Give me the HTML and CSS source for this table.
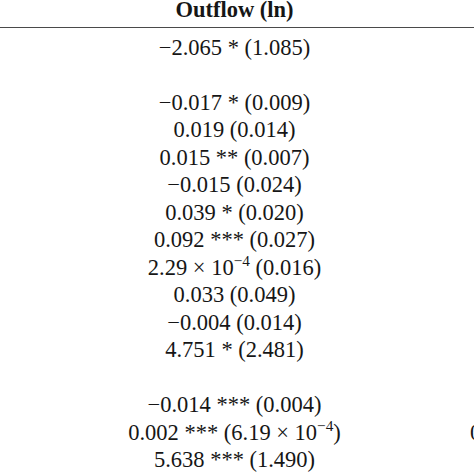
FILE: index.html
```html
<!DOCTYPE html>
<html lang="en">
<head>
<meta charset="utf-8">
<title>Outflow (ln)</title>
<link rel="stylesheet" href="styles.css">
</head>
<body>
<div class="table">
  <div class="row head"><div class="cell">Outflow (ln)</div><div class="cell side"></div></div>
  <div class="tbody">
    <div class="row"><div class="cell">−2.065 * (1.085)</div><div class="cell side"></div></div>
    <div class="row"><div class="cell"></div><div class="cell side"></div></div>
    <div class="row"><div class="cell">−0.017 * (0.009)</div><div class="cell side"></div></div>
    <div class="row"><div class="cell">0.019 (0.014)</div><div class="cell side"></div></div>
    <div class="row"><div class="cell">0.015 ** (0.007)</div><div class="cell side"></div></div>
    <div class="row"><div class="cell">−0.015 (0.024)</div><div class="cell side"></div></div>
    <div class="row"><div class="cell">0.039 * (0.020)</div><div class="cell side"></div></div>
    <div class="row"><div class="cell">0.092 *** (0.027)</div><div class="cell side"></div></div>
    <div class="row"><div class="cell">2.29 × 10<sup>−4</sup> (0.016)</div><div class="cell side"></div></div>
    <div class="row"><div class="cell">0.033 (0.049)</div><div class="cell side"></div></div>
    <div class="row"><div class="cell">−0.004 (0.014)</div><div class="cell side"></div></div>
    <div class="row"><div class="cell">4.751 * (2.481)</div><div class="cell side"></div></div>
    <div class="row"><div class="cell"></div><div class="cell side"></div></div>
    <div class="row"><div class="cell">−0.014 *** (0.004)</div><div class="cell side"></div></div>
    <div class="row"><div class="cell">0.002 *** (6.19 × 10<sup>−4</sup>)</div><div class="cell side">0</div></div>
    <div class="row"><div class="cell">5.638 *** (1.490)</div><div class="cell side"></div></div>
  </div>
</div>
</body>
</html>
```
FILE: styles.css
```css
html, body {
  margin: 0;
  padding: 0;
  background: #ffffff;
}
body {
  width: 474px;
  height: 474px;
  overflow: hidden;
}
.table {
  font-family: "Liberation Serif", "Times New Roman", serif;
  font-size: 22.5px;
  color: #161616;
  width: 560px;
}
.row {
  display: grid;
  grid-template-columns: 469px 91px;
  height: 27.5px;
  line-height: 27.5px;
}
.cell {
  text-align: center;
  white-space: nowrap;
}
.cell.side {
  text-align: left;
  padding-left: 1px;
}
.head {
  margin-top: -4.5px;
  padding-bottom: 4px;
  border-bottom: 1.5px solid #4a4a4a;
  font-weight: bold;
}
.tbody {
  padding-top: 5.7px;
}
sup {
  font-size: 0.68em;
  line-height: 0;
  vertical-align: 0.62em;
}
```
